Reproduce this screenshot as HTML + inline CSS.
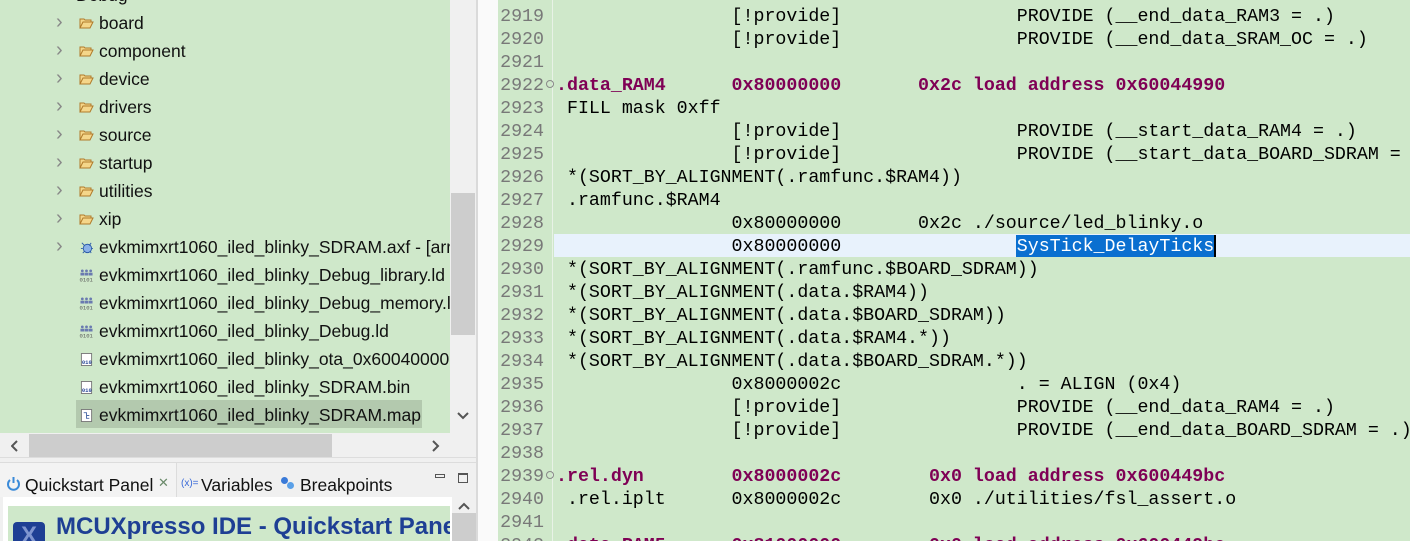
<!DOCTYPE html>
<html><head><style>
*{margin:0;padding:0;box-sizing:border-box}
body{width:1410px;height:541px;overflow:hidden;background:#f0f0f0;position:relative;font-family:"Liberation Sans",sans-serif}
.abs{position:absolute}
#tree{left:0;top:0;width:450px;height:433px;background:#cfe8ca;overflow:hidden}
.row{position:absolute;left:0;height:28px;line-height:28px;font-size:17.5px;color:#111;white-space:nowrap}
.chev{position:absolute;left:56px;top:-1px;color:#888;font-size:20px}
.ic{position:absolute;left:79px;top:8px;width:15px;height:13px}
.tx{position:absolute;left:99px}
#code{left:498px;top:0;width:912px;height:541px;background:#cfe8ca;overflow:hidden}
.ln{position:absolute;left:0;width:46px;text-align:right;color:#787878;font-family:"Liberation Mono",monospace;font-size:18.3px;line-height:23px}
.cl{position:absolute;left:58px;white-space:pre;font-family:"Liberation Mono",monospace;font-size:18.3px;line-height:23px;color:#000}
.p{color:#7f0055;font-weight:bold}
</style></head><body>
<div class="abs" id="tree">
 <div class="row" style="top:-19px"><span class="tx" style="left:76px">Debug</span></div>
 <div class="row" style="top:9px"><span class="chev">›</span><svg class="ic" viewBox="0 0 15 13"><path d="M1 2h4l1 1h6v2H4L1 11z M1 11l3-6h10l-3 6z" fill="#f5d68a" stroke="#b07a2a"/></svg><span class="tx">board</span></div>
 <div class="row" style="top:37px"><span class="chev">›</span><svg class="ic" viewBox="0 0 15 13"><path d="M1 2h4l1 1h6v2H4L1 11z M1 11l3-6h10l-3 6z" fill="#f5d68a" stroke="#b07a2a"/></svg><span class="tx">component</span></div>
 <div class="row" style="top:65px"><span class="chev">›</span><svg class="ic" viewBox="0 0 15 13"><path d="M1 2h4l1 1h6v2H4L1 11z M1 11l3-6h10l-3 6z" fill="#f5d68a" stroke="#b07a2a"/></svg><span class="tx">device</span></div>
 <div class="row" style="top:93px"><span class="chev">›</span><svg class="ic" viewBox="0 0 15 13"><path d="M1 2h4l1 1h6v2H4L1 11z M1 11l3-6h10l-3 6z" fill="#f5d68a" stroke="#b07a2a"/></svg><span class="tx">drivers</span></div>
 <div class="row" style="top:121px"><span class="chev">›</span><svg class="ic" viewBox="0 0 15 13"><path d="M1 2h4l1 1h6v2H4L1 11z M1 11l3-6h10l-3 6z" fill="#f5d68a" stroke="#b07a2a"/></svg><span class="tx">source</span></div>
 <div class="row" style="top:149px"><span class="chev">›</span><svg class="ic" viewBox="0 0 15 13"><path d="M1 2h4l1 1h6v2H4L1 11z M1 11l3-6h10l-3 6z" fill="#f5d68a" stroke="#b07a2a"/></svg><span class="tx">startup</span></div>
 <div class="row" style="top:177px"><span class="chev">›</span><svg class="ic" viewBox="0 0 15 13"><path d="M1 2h4l1 1h6v2H4L1 11z M1 11l3-6h10l-3 6z" fill="#f5d68a" stroke="#b07a2a"/></svg><span class="tx">utilities</span></div>
 <div class="row" style="top:205px"><span class="chev">›</span><svg class="ic" viewBox="0 0 15 13"><path d="M1 2h4l1 1h6v2H4L1 11z M1 11l3-6h10l-3 6z" fill="#f5d68a" stroke="#b07a2a"/></svg><span class="tx">xip</span></div>
 <div class="row" style="top:233px"><span class="chev">›</span><svg class="ic" viewBox="0 0 14 14"><circle cx="8" cy="8" r="4.5" fill="#8ab0e8" stroke="#2a5aa8"/><path d="M2 2l3 3M12 2l-2 3M1 8h2M13 8h1M3 13l2-2M12 13l-1-2" stroke="#2a5aa8"/></svg><span class="tx">evkmimxrt1060_iled_blinky_SDRAM.axf - [arm/le]</span></div>
 <div class="row" style="top:261px"><svg class="ic" viewBox="0 0 15 14"><g fill="#6a7ab0"><circle cx="3" cy="2" r="1.5"/><circle cx="7.5" cy="2" r="1.5"/><circle cx="12" cy="2" r="1.5"/><rect x="1" y="4" width="4" height="3"/><rect x="5.5" y="4" width="4" height="3"/><rect x="10" y="4" width="4" height="3"/></g><text x="0" y="13.5" font-size="6" fill="#555" font-family="Liberation Mono">0101</text></svg><span class="tx">evkmimxrt1060_iled_blinky_Debug_library.ld</span></div>
 <div class="row" style="top:289px"><svg class="ic" viewBox="0 0 15 14"><g fill="#6a7ab0"><circle cx="3" cy="2" r="1.5"/><circle cx="7.5" cy="2" r="1.5"/><circle cx="12" cy="2" r="1.5"/><rect x="1" y="4" width="4" height="3"/><rect x="5.5" y="4" width="4" height="3"/><rect x="10" y="4" width="4" height="3"/></g><text x="0" y="13.5" font-size="6" fill="#555" font-family="Liberation Mono">0101</text></svg><span class="tx">evkmimxrt1060_iled_blinky_Debug_memory.ld</span></div>
 <div class="row" style="top:317px"><svg class="ic" viewBox="0 0 15 14"><g fill="#6a7ab0"><circle cx="3" cy="2" r="1.5"/><circle cx="7.5" cy="2" r="1.5"/><circle cx="12" cy="2" r="1.5"/><rect x="1" y="4" width="4" height="3"/><rect x="5.5" y="4" width="4" height="3"/><rect x="10" y="4" width="4" height="3"/></g><text x="0" y="13.5" font-size="6" fill="#555" font-family="Liberation Mono">0101</text></svg><span class="tx">evkmimxrt1060_iled_blinky_Debug.ld</span></div>
 <div class="row" style="top:345px"><svg class="ic" viewBox="0 0 14 14"><rect x="1.5" y="0.5" width="11" height="13" fill="#fff" stroke="#777"/><text x="2" y="12" font-size="6" fill="#2a4a98" font-family="Liberation Mono" font-weight="bold">010</text></svg><span class="tx">evkmimxrt1060_iled_blinky_ota_0x60040000.bin</span></div>
 <div class="row" style="top:373px"><svg class="ic" viewBox="0 0 14 14"><rect x="1.5" y="0.5" width="11" height="13" fill="#fff" stroke="#777"/><text x="2" y="12" font-size="6" fill="#2a4a98" font-family="Liberation Mono" font-weight="bold">010</text></svg><span class="tx">evkmimxrt1060_iled_blinky_SDRAM.bin</span></div>
 <div class="abs" style="left:76px;top:400px;width:346px;height:28px;background:#b3c9ae"></div>
 <div class="row" style="top:401px"><svg class="ic" viewBox="0 0 14 14"><rect x="1.5" y="0.5" width="11" height="13" fill="#fff" stroke="#777"/><path d="M4 4h3v6h3M7 7h3" stroke="#4a6aa8" fill="none"/></svg><span class="tx">evkmimxrt1060_iled_blinky_SDRAM.map</span></div>
</div>
<div class="abs" style="left:450px;top:0;width:26px;height:433px;background:#f0f0f0"></div>
<div class="abs" style="left:451px;top:193px;width:24px;height:142px;background:#cdcdcd"></div>
<svg class="abs" style="left:457px;top:412px" width="12" height="8"><path d="M1 1l5 5 5-5" stroke="#555" stroke-width="2" fill="none"/></svg>
<div class="abs" style="left:0;top:433px;width:476px;height:25px;background:#f0f0f0;border-bottom:1px solid #ddd"></div>
<div class="abs" style="left:29px;top:434px;width:303px;height:23px;background:#cdcdcd"></div>
<svg class="abs" style="left:11px;top:440px" width="8" height="12"><path d="M6 1l-5 5 5 5" stroke="#555" stroke-width="2" fill="none"/></svg>
<svg class="abs" style="left:432px;top:440px" width="8" height="12"><path d="M1 1l5 5-5 5" stroke="#555" stroke-width="2" fill="none"/></svg>
<div class="abs" style="left:476px;top:0;width:2px;height:541px;background:#dadada"></div>
<div class="abs" style="left:478px;top:0;width:20px;height:541px;background:#fafafa"></div>
<div class="abs" style="left:0;top:462px;width:476px;height:35px;background:#f0f0f0;border-top:1px solid #dcdcdc"></div>
<div class="abs" style="left:0;top:463px;width:177px;height:34px;background:#f3f3f3;border-right:1px solid #dcdcdc"></div>
<svg class="abs" style="left:6px;top:476px" width="15" height="15"><path d="M4 4a5.5 5.5 0 1 0 7 0" stroke="#3a8ad8" stroke-width="2" fill="none"/><path d="M7.5 1v6" stroke="#3a8ad8" stroke-width="2"/></svg>
<div class="abs" style="left:25px;top:475px;font-size:17.5px;color:#111">Quickstart Panel</div>
<div class="abs" style="left:158px;top:475px;font-size:13px;color:#6a8a6a">✕</div>
<div class="abs" style="left:181px;top:478px;font-size:10px;color:#3a6ad8">(x)=</div>
<div class="abs" style="left:201px;top:475px;font-size:17.5px;color:#111">Variables</div>
<div class="abs" style="left:281px;top:477px;width:7px;height:7px;border-radius:50%;background:#3a7ad8"></div>
<div class="abs" style="left:287px;top:482px;width:7px;height:7px;border-radius:50%;background:#5aa0e8"></div>
<div class="abs" style="left:300px;top:475px;font-size:17.5px;color:#111">Breakpoints</div>
<div class="abs" style="left:435px;top:474px;width:10px;height:4px;border:1px solid #555"></div>
<div class="abs" style="left:458px;top:473px;width:10px;height:10px;border:1px solid #555;border-top-width:2px"></div>
<div class="abs" style="left:3px;top:497px;width:473px;height:44px;background:#fff"></div>
<div class="abs" style="left:8px;top:506px;width:442px;height:35px;background:#cfe8ca;overflow:hidden">
 <div class="abs" style="left:5px;top:16px;width:32px;height:26px;background:#1e3f94;border-radius:4px;color:#7f95d0;font-weight:bold;font-size:24px;text-align:center;line-height:28px">X</div>
 <div class="abs" style="left:48px;top:7px;font-size:24px;font-weight:bold;color:#1e3f94;white-space:nowrap">MCUXpresso IDE - Quickstart Panel</div>
</div>
<div class="abs" style="left:452px;top:497px;width:24px;height:44px;background:#f0f0f0"></div>
<div class="abs" style="left:452px;top:513px;width:24px;height:28px;background:#cdcdcd"></div>
<svg class="abs" style="left:458px;top:502px" width="12" height="8"><path d="M1 7l5-5 5 5" stroke="#555" stroke-width="2" fill="none"/></svg>
<div class="abs" id="code">
 <div class="abs" style="left:54px;top:0;width:1px;height:541px;background:#e8f2e6"></div>
 <div class="abs" style="left:56px;top:234px;width:856px;height:23px;background:#e8f2fc"></div>
 <div class="abs" style="left:518px;top:235px;width:198px;height:22px;background:#0a6fd0"></div>
 <div class="abs" style="left:716px;top:235px;width:2px;height:22px;background:#000"></div>
 <div class="abs" style="left:48px;top:80px;width:8px;height:8px;border:1px solid #888;border-radius:50%"></div>
 <div class="abs" style="left:48px;top:471px;width:8px;height:8px;border:1px solid #888;border-radius:50%"></div>
 <div class="ln" style="top:6px">2919<br>2920<br>2921<br>2922<br>2923<br>2924<br>2925<br>2926<br>2927<br>2928<br>2929<br>2930<br>2931<br>2932<br>2933<br>2934<br>2935<br>2936<br>2937<br>2938<br>2939<br>2940<br>2941<br>2942</div>
 <div class="cl" style="top:6px">                [!provide]                PROVIDE (__end_data_RAM3 = .)
                [!provide]                PROVIDE (__end_data_SRAM_OC = .)

<span class="p">.data_RAM4      0x80000000       0x2c load address 0x60044990</span>
 FILL mask 0xff
                [!provide]                PROVIDE (__start_data_RAM4 = .)
                [!provide]                PROVIDE (__start_data_BOARD_SDRAM = .)
 *(SORT_BY_ALIGNMENT(.ramfunc.$RAM4))
 .ramfunc.$RAM4
                0x80000000       0x2c ./source/led_blinky.o
                0x80000000                <span style="color:#fff">SysTick_DelayTicks</span>
 *(SORT_BY_ALIGNMENT(.ramfunc.$BOARD_SDRAM))
 *(SORT_BY_ALIGNMENT(.data.$RAM4))
 *(SORT_BY_ALIGNMENT(.data.$BOARD_SDRAM))
 *(SORT_BY_ALIGNMENT(.data.$RAM4.*))
 *(SORT_BY_ALIGNMENT(.data.$BOARD_SDRAM.*))
                0x8000002c                . = ALIGN (0x4)
                [!provide]                PROVIDE (__end_data_RAM4 = .)
                [!provide]                PROVIDE (__end_data_BOARD_SDRAM = .)

<span class="p">.rel.dyn        0x8000002c        0x0 load address 0x600449bc</span>
 .rel.iplt      0x8000002c        0x0 ./utilities/fsl_assert.o

<span class="p">.data_RAM5      0x81000000        0x0 load address 0x600449bc</span></div>
</div>
</body></html>
